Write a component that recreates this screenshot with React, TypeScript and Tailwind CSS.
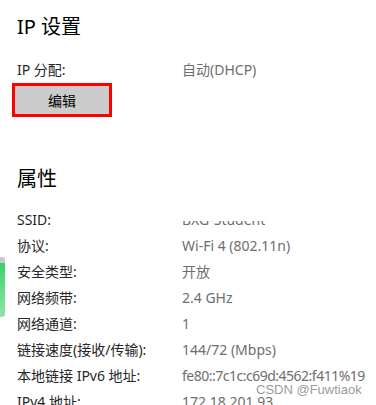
const rows: [string, string][] = [
  ["SSID:", "BXG-Student"],
  ["协议:", "Wi-Fi 4 (802.11n)"],
  ["安全类型:", "开放"],
  ["网络频带:", "2.4 GHz"],
  ["网络通道:", "1"],
  ["链接速度(接收/传输):", "144/72 (Mbps)"],
  ["本地链接 IPv6 地址:", "fe80::7c1c:c69d:4562:f411%19"],
  ["IPv4 地址:", "172.18.201.93"],
];

export default function App() {
  return (
    <div
      className="relative h-[405px] w-[376px] overflow-hidden bg-white pl-[17px] pt-[10px] text-[14px] text-[#262626]"
      style={{ fontFamily: '"Noto Sans", "Noto Sans CJK SC", sans-serif' }}
    >
      <h2 className="flex h-[34px] items-center text-[20px] text-black">IP 设置</h2>

      <div className="mt-[12px] flex h-[26px] items-center">
        <span className="w-[165px]">IP 分配:</span>
        <span className="text-[#6e6e6e]">自动(DHCP)</span>
      </div>

      {/* button with red annotation frame */}
      <div className="ml-[-5px] mt-[1px] h-[34px] w-[100px] border-[3px] border-[#ff0000]">
        <button className="flex h-full w-full items-center justify-center bg-[#cccccc] text-[14px] text-black">
          编辑
        </button>
      </div>

      <h2 className="mt-[45px] flex h-[34px] items-center text-[20px] text-black">属性</h2>

      <div className="mt-[10px] flex flex-col">
        {rows.map(([label, value], i) => (
          <div key={label} className="flex h-[26px] items-center">
            <span className="w-[165px] shrink-0 whitespace-nowrap">{label}</span>
            <span
              className={
                i === 6
                  ? "relative whitespace-nowrap tracking-[-0.5px] text-[#6e6e6e]"
                  : "relative whitespace-nowrap text-[#6e6e6e]"
              }
            >
              {value}
              {i === 0 && <span className="absolute inset-x-0 top-0 h-[12px] bg-white" />}
            </span>
          </div>
        ))}
      </div>

      {/* side tab peeking at the left edge */}
      <div className="absolute left-0 top-[257px] flex h-[60px] w-[5px] flex-col overflow-hidden rounded-r-[3px]">
        <div className="h-[6px] bg-[#c8c8c8]" />
        <div className="flex-1 bg-gradient-to-b from-[#2fd06a] to-[#8fe6a8]" />
      </div>

      <div
        className="absolute left-[256px] top-[380px] text-[13px] text-[#9a9a9a]"
        style={{ fontFamily: '"Liberation Sans", Arial, sans-serif' }}
      >
        CSDN @Fuwtiaok
      </div>
    </div>
  );
}
